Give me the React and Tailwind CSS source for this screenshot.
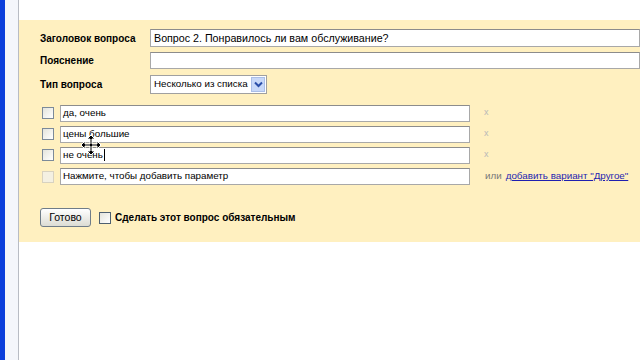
export default function App() {
  const options = ['да, очень', 'цены большие', 'не очень']
  return (
    <div className="w-[640px] h-[360px] bg-white flex overflow-hidden relative" style={{ fontFamily: '"Liberation Sans", Arial, sans-serif' }}>
      <div className="w-[5px] h-full bg-[#0b3fdc]" />
      <div className="w-[14px] h-full bg-[#f4f6fb] border-r border-[#b8bcc4]" />
      <div className="flex-1 pt-[20px]">
        <div className="bg-[#fff0c0] h-[222px] pl-[21px] pt-[9px] text-[9.8px] text-black whitespace-nowrap">
          <div className="flex items-center h-[18px]">
            <span className="w-[110px] font-bold text-[10px]">Заголовок вопроса</span>
            <div className="flex-1 h-[18px] bg-white border border-[#a8a8a8] border-t-[#8c8c8c] px-[3px] flex items-center text-[10.7px]">Вопрос 2. Понравилось ли вам обслуживание?</div>
          </div>
          <div className="flex items-center h-[17px] mt-[5px]">
            <span className="w-[110px] font-bold text-[10px]">Пояснение</span>
            <div className="flex-1 h-[17px] bg-white border border-[#a8a8a8] border-t-[#8c8c8c]" />
          </div>
          <div className="flex items-center h-[19px] mt-[6px]">
            <span className="w-[110px] font-bold text-[10px]">Тип вопроса</span>
            <div className="w-[117px] h-[19px] bg-white border border-[#a0a0a0] flex items-center pl-[3px] pr-[1px] justify-between">
              <span>Несколько из списка</span>
              <span className="w-[14px] h-[15px] bg-[#c8d8f8] border border-[#aabee8] flex items-center justify-center">
                <svg width="9" height="7" viewBox="0 0 9 7"><path d="M1 1.5 L4.5 5 L8 1.5" stroke="#2a4ea8" strokeWidth="2" fill="none" /></svg>
              </span>
            </div>
          </div>
          <div className="mt-[11px] flex flex-col gap-[5px]">
            {options.map((o, i) => (
              <div key={o} className="flex items-center h-[16px]">
                <span className="shrink-0 w-[12px] h-[12px] ml-[2px] border border-[#7c8a99] bg-gradient-to-br from-[#e4e4dc] to-white" />
                <div className="shrink-0 ml-[6px] w-[410px] h-[17px] bg-white border border-[#a8a8a8] border-t-[#8c8c8c] pl-[2px] flex items-center">
                  {o}
                  {i === 2 && <span className="w-px h-[12px] bg-black ml-px" />}
                </div>
                <span className="ml-[14px] text-[#b8b8b8] text-[9px]">x</span>
              </div>
            ))}
            <div className="flex items-center h-[17px]">
              <span className="shrink-0 w-[12px] h-[12px] ml-[2px] border border-[#d8d2c0] bg-[#f4f0e2]" />
              <div className="shrink-0 ml-[6px] w-[410px] h-[17px] bg-white border border-[#a8a8a8] border-t-[#8c8c8c] pl-[2px] flex items-center">Нажмите, чтобы добавить параметр</div>
              <span className="ml-[15px] text-[#777]">или</span>
              <a href="#" className="ml-[4px] text-[#1f1fb0] underline">добавить вариант "Другое"</a>
            </div>
          </div>
          <div className="mt-[23px] flex items-center">
            <button className="w-[51px] h-[19px] rounded-[3px] border border-[#6f7c88] bg-gradient-to-b from-white to-[#dcdcd4] flex items-center justify-center text-[10.5px]">Готово</button>
            <span className="ml-[8px] w-[12px] h-[12px] border border-[#4f6070] bg-gradient-to-br from-[#e4e4dc] to-white" />
            <span className="ml-[4px] font-bold text-[10px]">Сделать этот вопрос обязательным</span>
          </div>
        </div>
      </div>
      <svg className="absolute left-[80px] top-[134px]" width="22" height="22" viewBox="0 0 22 22">
        <path d="M11 1 L15 5 L12 5 L12 10 L17 10 L17 7 L21 11 L17 15 L17 12 L12 12 L12 17 L15 17 L11 21 L7 17 L10 17 L10 12 L5 12 L5 15 L1 11 L5 7 L5 10 L10 10 L10 5 L7 5 Z" fill="black" stroke="white" strokeWidth="1" />
      </svg>
    </div>
  )
}
